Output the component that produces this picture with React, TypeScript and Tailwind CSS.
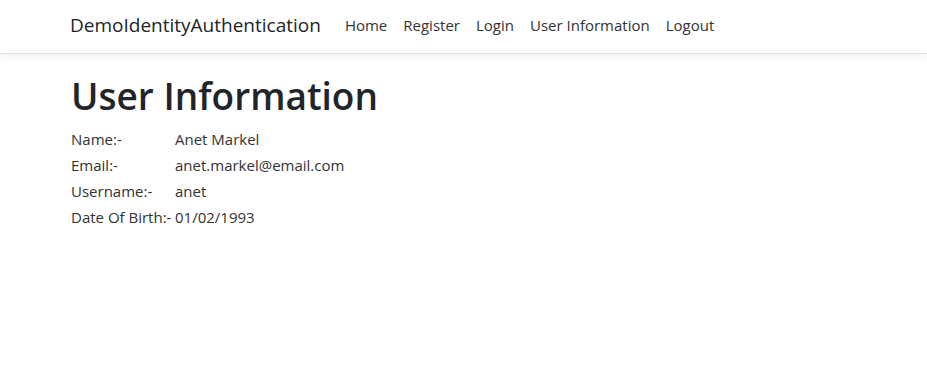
import React from 'react';

const navLinks = ['Home', 'Register', 'Login', 'User Information', 'Logout'];

const rows = [
  { label: 'Name:-', value: 'Anet Markel' },
  { label: 'Email:-', value: 'anet.markel@email.com' },
  { label: 'Username:-', value: 'anet' },
  { label: 'Date Of Birth:-', value: '01/02/1993' },
];

export default function App() {
  return (
    <div className="min-h-screen bg-white text-[#212529]" style={{ fontFamily: '"Segoe UI", "Open Sans", sans-serif' }}>
      <header className="h-[54px] border-b border-[#dee2e6] bg-white shadow-[0_4px_8px_rgba(0,0,0,0.05)]">
        <nav className="flex h-full items-center pb-[3px] pl-[70px]">
          <a className="mr-[24px] text-[19px] text-[#212529]">DemoIdentityAuthentication</a>
          <ul className="flex items-center gap-[16px]">
            {navLinks.map((l) => (
              <li key={l} className="text-[15px] text-[#333]">
                {l}
              </li>
            ))}
          </ul>
        </nav>
      </header>

      <main className="pl-[71px] pt-[18px]">
        <h1 className="mb-[6px] text-[37px] font-semibold leading-[48px] text-[#212529]">User Information</h1>
        <table className="border-collapse text-[15px]">
          <tbody>
            {rows.map((r) => (
              <tr key={r.label} className="h-[26px]">
                <td className="w-[104px] whitespace-nowrap p-0 align-middle text-[#333]">{r.label}</td>
                <td className="p-0 align-middle text-[#333]">{r.value}</td>
              </tr>
            ))}
          </tbody>
        </table>
      </main>
    </div>
  );
}
